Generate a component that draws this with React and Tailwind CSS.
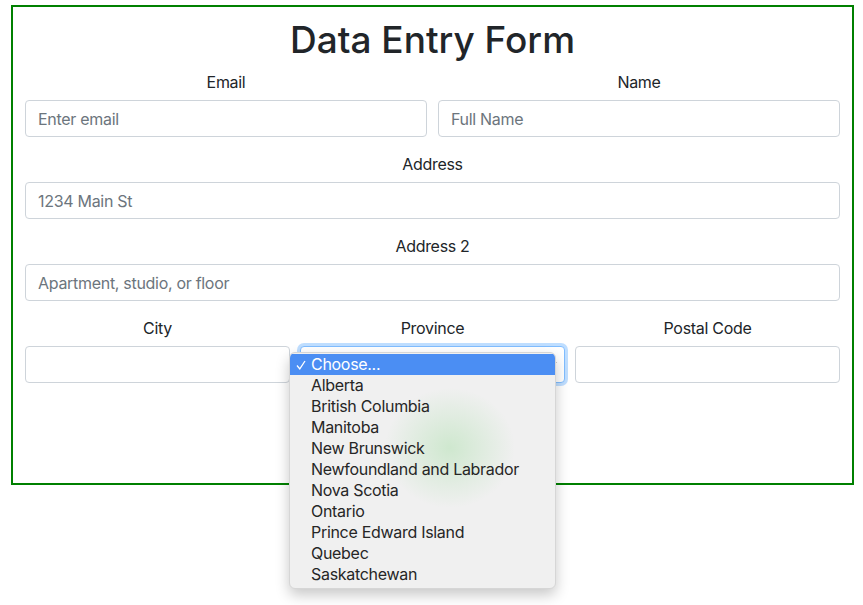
import React from "react";

const provinces = [
  "Alberta",
  "British Columbia",
  "Manitoba",
  "New Brunswick",
  "Newfoundland and Labrador",
  "Nova Scotia",
  "Ontario",
  "Prince Edward Island",
  "Quebec",
  "Saskatchewan",
];

function Label({ children }) {
  return (
    <div className="text-center text-[16px] leading-[24px] tracking-[-0.3px] text-[#212529] mb-[6px]">
      {children}
    </div>
  );
}

function Input({ placeholder }) {
  return (
    <div className="h-[37px] border border-[#ced4da] rounded-[4px] bg-white px-[12px] flex items-center text-[16px] tracking-[-0.3px] text-[#6c757d]">
      {placeholder}
    </div>
  );
}

export default function App() {
  return (
    <div
      className="w-[863px] h-[605px] bg-white relative overflow-hidden"
      style={{ fontFamily: "Inter, 'Noto Sans', sans-serif" }}
    >
      <div className="mt-[5px] ml-[11px] w-[843px] h-[480px] border-2 border-[#008000] px-[12px] pt-[11px]">
        <h1 className="text-center text-[37px] leading-[44px] font-medium text-[#212529] mb-[8px]">
          Data Entry Form
        </h1>
        <div className="flex gap-[11px] mb-[15px]">
          <div className="flex-1">
            <Label>Email</Label>
            <Input placeholder="Enter email" />
          </div>
          <div className="flex-1">
            <Label>Name</Label>
            <Input placeholder="Full Name" />
          </div>
        </div>
        <div className="mb-[15px]">
          <Label>Address</Label>
          <Input placeholder="1234 Main St" />
        </div>
        <div className="mb-[15px]">
          <Label>Address 2</Label>
          <Input placeholder="Apartment, studio, or floor" />
        </div>
        <div className="flex gap-[10px]">
          <div className="flex-1">
            <Label>City</Label>
            <Input placeholder="" />
          </div>
          <div className="flex-1">
            <Label>Province</Label>
            <div className="relative">
              <div className="h-[37px] border border-[#80bdff] rounded-[4px] bg-white shadow-[0_0_0_3px_rgba(0,123,255,0.25)] flex items-center justify-end pr-[6px]">
                <svg width="8" height="8" viewBox="0 0 8 8">
                  <path d="M1 6 L6 1" stroke="#333" strokeWidth="1.5" fill="none" />
                </svg>
              </div>
              <div className="absolute left-[-11px] top-[6px] w-[267px] z-10 rounded-[6px] bg-[#f0f0f0] border border-[#d6d6d6] shadow-[0_6px_14px_rgba(0,0,0,0.22)] pt-[1px] pb-[3px] overflow-hidden">
                <div className="absolute left-[95px] top-[35px] w-[130px] h-[120px] rounded-full bg-[radial-gradient(closest-side,rgba(120,210,120,0.28),rgba(120,210,120,0))]" />
                <div className="relative h-[21px] bg-[#4b8ef3] text-white text-[16px] leading-[21px] tracking-[-0.3px] flex items-center">
                  <span className="w-[21px] flex justify-center pl-[1px]">
                    <svg width="10" height="10" viewBox="0 0 10 10">
                      <path d="M1 5.5 L3.8 8.8 L9 1" stroke="#fff" strokeWidth="1.3" fill="none" />
                    </svg>
                  </span>
                  <span>Choose...</span>
                </div>
                {provinces.map((p) => (
                  <div
                    key={p}
                    className="relative h-[21px] text-[16px] leading-[21px] tracking-[-0.3px] text-[#262626] pl-[21px]"
                  >
                    {p}
                  </div>
                ))}
              </div>
            </div>
          </div>
          <div className="flex-1">
            <Label>Postal Code</Label>
            <Input placeholder="" />
          </div>
        </div>
      </div>
    </div>
  );
}
